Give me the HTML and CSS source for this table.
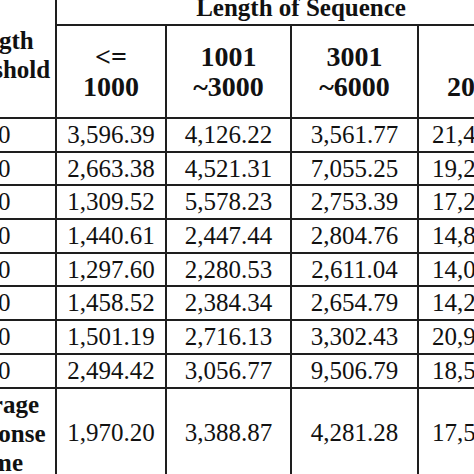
FILE: index.html
```html
<!DOCTYPE html>
<html>
<head>
<meta charset="utf-8">
<link rel="stylesheet" href="styles.css">
</head>
<body>
<table class="grid">
  <colgroup>
    <col class="col-label">
    <col class="col-a">
    <col class="col-b">
    <col class="col-c">
    <col class="col-d">
  </colgroup>
  <thead>
    <tr class="row-group">
      <th rowspan="2" class="label-head">Length<br>Threshold</th>
      <th colspan="4" class="group-head">Length of Sequence</th>
    </tr>
    <tr class="row-sub">
      <th class="sub-head">&lt;=<br>1000</th>
      <th class="sub-head">1001<br>~3000</th>
      <th class="sub-head">3001<br>~6000</th>
      <th class="sub-head">&gt;<br>20000</th>
    </tr>
  </thead>
  <tbody>
    <tr class="row-data"><td class="label">10</td><td>3,596.39</td><td>4,126.22</td><td>3,561.77</td><td>21,458.12</td></tr>
    <tr class="row-data"><td class="label">20</td><td>2,663.38</td><td>4,521.31</td><td>7,055.25</td><td>19,274.60</td></tr>
    <tr class="row-data"><td class="label">30</td><td>1,309.52</td><td>5,578.23</td><td>2,753.39</td><td>17,236.48</td></tr>
    <tr class="row-data"><td class="label">40</td><td>1,440.61</td><td>2,447.44</td><td>2,804.76</td><td>14,852.33</td></tr>
    <tr class="row-data"><td class="label">50</td><td>1,297.60</td><td>2,280.53</td><td>2,611.04</td><td>14,069.17</td></tr>
    <tr class="row-data"><td class="label">60</td><td>1,458.52</td><td>2,384.34</td><td>2,654.79</td><td>14,213.95</td></tr>
    <tr class="row-data"><td class="label">70</td><td>1,501.19</td><td>2,716.13</td><td>3,302.43</td><td>20,917.06</td></tr>
    <tr class="row-data"><td class="label">80</td><td>2,494.42</td><td>3,056.77</td><td>9,506.79</td><td>18,540.81</td></tr>
    <tr class="row-avg"><th class="label-head">Average<br>Response<br>Time</th><td>1,970.20</td><td>3,388.87</td><td>4,281.28</td><td>17,570.32</td></tr>
  </tbody>
</table>
</body>
</html>
```
FILE: styles.css
```css
html, body {
  margin: 0;
  padding: 0;
  background: #ffffff;
  overflow: hidden;
  width: 474px;
  height: 474px;
}

.grid {
  border-collapse: collapse;
  table-layout: fixed;
  width: 611px;
  margin-left: -66px;
  margin-top: -10px;
  font-family: "Liberation Serif", "Times New Roman", serif;
  color: #111111;
}

.col-label { width: 121px; }
.col-a { width: 110px; }
.col-b { width: 125px; }
.col-c { width: 127px; }
.col-d { width: 128px; }

.grid th,
.grid td {
  border: 2px solid #1e1e1e;
  padding: 0;
  text-align: center;
  vertical-align: middle;
}

.grid th {
  font-weight: bold;
}

.row-group { height: 34px; }
.row-sub { height: 93px; }
.row-data { height: 33.7px; }
.row-avg { height: 91px; }

.group-head {
  font-size: 25px;
  line-height: 28px;
  padding-top: 2px;
}

.sub-head {
  font-size: 28px;
  line-height: 30px;
  padding-top: 2px;
}

.label-head {
  font-size: 25px;
  line-height: 29px;
}

.grid td {
  font-size: 25px;
  line-height: 28px;
  font-weight: normal;
}

.grid td.label {
  padding-left: 5px;
}
```
